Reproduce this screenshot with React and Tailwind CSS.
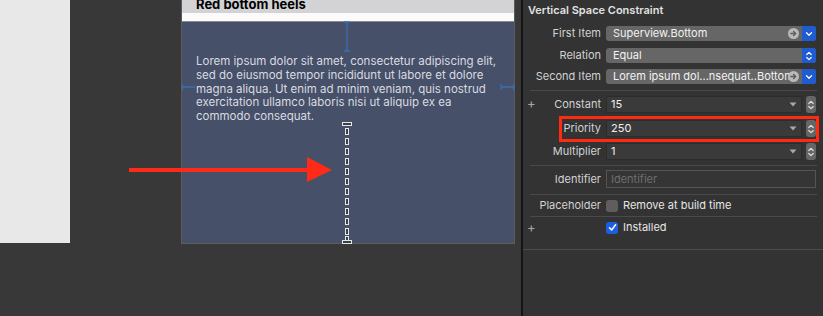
import React from "react";

const font = { fontFamily: "Inter, 'Liberation Sans', sans-serif" };

function ChevDown() {
  return (
    <svg width="8" height="6" viewBox="0 0 8 6">
      <path d="M1.5 1.8 L4 4.2 L6.5 1.8" fill="none" stroke="#fff" strokeWidth="1.3" strokeLinecap="round" strokeLinejoin="round" />
    </svg>
  );
}

function ChevUpDown({ color = "#fff" }) {
  return (
    <svg width="8" height="12" viewBox="0 0 8 12">
      <path d="M1.8 4.5 L4 2.3 L6.2 4.5" fill="none" stroke={color} strokeWidth="1.2" strokeLinecap="round" strokeLinejoin="round" />
      <path d="M1.8 7.5 L4 9.7 L6.2 7.5" fill="none" stroke={color} strokeWidth="1.2" strokeLinecap="round" strokeLinejoin="round" />
    </svg>
  );
}

function GoCircle() {
  return (
    <svg width="11" height="11" viewBox="0 0 11 11">
      <circle cx="5.5" cy="5.5" r="5.5" fill="#b9b9b9" />
      <path d="M2.8 5.5 H7.6 M5.6 3.4 L7.7 5.5 L5.6 7.6" fill="none" stroke="#5e5e5e" strokeWidth="1.4" strokeLinecap="round" strokeLinejoin="round" />
    </svg>
  );
}

function Label({ children }) {
  return <div className="w-[83px] shrink-0 pr-[5px] text-right text-[11px] text-[#d2d2d2]">{children}</div>;
}

function PopupRow({ label, value, cap, go, mt }) {
  return (
    <div className={`flex h-[15px] items-center ${mt}`}>
      <Label>{label}</Label>
      <div className="flex h-[15px] w-[210px] overflow-hidden rounded-[3px] bg-[#666666]">
        <div className="relative flex flex-1 items-center overflow-hidden pl-[7px] text-[11px] whitespace-nowrap text-[#f2f2f2]">
          {value}
          {go && (
            <div className="absolute right-[3px] top-[2px]">
              <GoCircle />
            </div>
          )}
        </div>
        <div className="flex w-[14px] items-center justify-center bg-[#1f5bd1]">
          {cap === "updown" ? <ChevUpDown /> : <ChevDown />}
        </div>
      </div>
    </div>
  );
}

function ComboRow({ label, value, mt }) {
  return (
    <div className={`flex h-[17px] items-center ${mt}`}>
      <Label>{label}</Label>
      <div className="flex h-[17px] w-[196px] items-center justify-between border border-[#2c2c2c] bg-[#3a3a3a] pl-[4px] pr-[4px] text-[11px] text-[#efefef]">
        <span>{value}</span>
        <svg width="8" height="5" viewBox="0 0 8 5">
          <path d="M0.5 0.5 H7.5 L4 4.5 Z" fill="#a8a8a8" />
        </svg>
      </div>
      <div className="ml-[4px] flex h-[17px] w-[10px] items-center justify-center rounded-[3px] bg-[#666666]">
        <ChevUpDown color="#e0e0e0" />
      </div>
    </div>
  );
}

function Sep({ mt }) {
  return <div className={`ml-[7px] h-px w-[287px] bg-[#4a4a4a] ${mt}`} />;
}

function ConstraintDashes() {
  const dashes = [];
  for (let y = 129; y < 236; y += 10) {
    dashes.push(<rect key={y} x="3.5" y={y - 122 + 0.5} width="3" height="6" fill="#3b3f4a" stroke="#e6e6e6" strokeWidth="1" />);
  }
  return (
    <svg width="10" height="124" viewBox="0 0 10 124" className="absolute left-[160px] top-[121px]">
      <rect x="0.5" y="1.5" width="9" height="3" fill="#3b3f4a" stroke="#e6e6e6" strokeWidth="1" />
      {dashes}
      <rect x="3.5" y="115.5" width="3" height="4" fill="#3b3f4a" stroke="#e6e6e6" strokeWidth="1" />
      <rect x="0.5" y="119.5" width="9" height="3" fill="#3b3f4a" stroke="#e6e6e6" strokeWidth="1" />
    </svg>
  );
}

export default function App() {
  return (
    <div className="flex h-[316px] w-[823px] overflow-hidden bg-[#383838]" style={font}>
      {/* canvas */}
      <div className="relative flex w-[521px] shrink-0 items-start">
        <div className="h-[243px] w-[70px] bg-[#e8e8e8]" />
        <div className="relative ml-[111px] flex h-[244px] w-[334px] flex-col border border-[#5c5c5c] border-t-0 bg-[#465068]">
          <div className="h-[13px] overflow-hidden bg-[#d3d3d5] pl-[14px]">
            <div className="-mt-[2px] text-[13px] font-bold leading-[13px] text-black">Red bottom heels</div>
          </div>
          <div className="h-[8px] bg-[#fbfbfb]" />
          <div className="h-px bg-[#8c8c90]" />
          <p className="ml-[14px] mt-[33px] text-[11.5px] leading-[13.8px] whitespace-nowrap text-[#d9dbe0]">
            Lorem ipsum dolor sit amet, consectetur adipiscing elit,
            <br />
            sed do eiusmod tempor incididunt ut labore et dolore
            <br />
            magna aliqua. Ut enim ad minim veniam, quis nostrud
            <br />
            exercitation ullamco laboris nisi ut aliquip ex ea
            <br />
            commodo consequat.
          </p>

          {/* blue constraint markers */}
          <svg width="8" height="32" viewBox="0 0 8 32" className="absolute left-[161px] top-[21px]">
            <path d="M1 1 H7 M4 1 V30 M1 30 H7" stroke="#3b6db3" strokeWidth="1.3" fill="none" />
          </svg>
          <svg width="14" height="8" viewBox="0 0 14 8" className="absolute left-0 top-[83px]">
            <path d="M0.5 1 V7 M0.5 4 H13" stroke="#3b6db3" strokeWidth="1.3" fill="none" />
          </svg>
          <svg width="14" height="8" viewBox="0 0 14 8" className="absolute right-0 top-[83px]">
            <path d="M1 1 V7 M1 4 H13.5 M13.5 1 V7" stroke="#3b6db3" strokeWidth="1.3" fill="none" />
          </svg>

          <ConstraintDashes />
        </div>

        {/* red annotation arrow */}
        <svg width="205" height="26" viewBox="0 0 205 26" className="absolute left-[129px] top-[157px]">
          <rect x="0" y="11" width="182" height="4" fill="#ff2a17" />
          <path d="M178 0 L203 13 L178 25 Z" fill="#ff2a17" />
        </svg>
      </div>

      {/* inspector */}
      <div className="relative flex flex-1 flex-col border-l-2 border-[#141414] bg-[#333333]">
        <div className="flex h-[20px] items-center pl-[5px] text-[11px] font-semibold text-[#e2e2e2]">
          Vertical Space Constraint
        </div>
        <PopupRow label="First Item" value="Superview.Bottom" go mt="mt-[6px]" />
        <PopupRow label="Relation" value="Equal" cap="updown" mt="mt-[7px]" />
        <PopupRow label="Second Item" value="Lorem ipsum dol...nsequat..Bottom" go mt="mt-[6px]" />
        <Sep mt="mt-[6px]" />
        <div className="relative">
          <span className="absolute left-[4px] top-[6px] text-[13px] leading-[13px] text-[#a8a8a8]">+</span>
          <ComboRow label="Constant" value="15" mt="mt-[5px]" />
        </div>
        <ComboRow label="Priority" value="250" mt="mt-[7px]" />
        <ComboRow label="Multiplier" value="1" mt="mt-[6px]" />
        <Sep mt="mt-[5px]" />
        <div className="mt-[4px] flex h-[18px] items-center">
          <Label>Identifier</Label>
          <div className="flex h-[18px] w-[210px] items-center border border-[#555555] bg-[#353535] pl-[4px] text-[11px] text-[#6e6e6e]">
            Identifier
          </div>
        </div>
        <Sep mt="mt-[6px]" />
        <div className="flex h-[21px] items-center">
          <Label>Placeholder</Label>
          <div className="h-[12px] w-[12px] rounded-[3px] bg-[#5e5e5e]" />
          <span className="ml-[5px] text-[11px] text-[#e6e6e6]">Remove at build time</span>
        </div>
        <Sep />
        <div className="relative flex h-[21px] items-center">
          <span className="absolute left-[4px] top-[4px] text-[13px] leading-[13px] text-[#a8a8a8]">+</span>
          <Label>{""}</Label>
          <div className="flex h-[12px] w-[12px] items-center justify-center rounded-[3px] bg-[#1d5fe3]">
            <svg width="9" height="9" viewBox="0 0 9 9">
              <path d="M1.5 4.8 L3.6 7 L7.6 1.8" fill="none" stroke="#fff" strokeWidth="1.5" strokeLinecap="round" strokeLinejoin="round" />
            </svg>
          </div>
          <span className="ml-[5px] text-[11px] text-[#e6e6e6]">Installed</span>
        </div>
        <div className="mt-[11px] h-px w-full bg-[#4c4c4c]" />

        {/* red highlight box */}
        <div className="absolute left-[36px] top-[116px] h-[26px] w-[260px] border-[3px] border-[#ff2a12]" />
      </div>
    </div>
  );
}
